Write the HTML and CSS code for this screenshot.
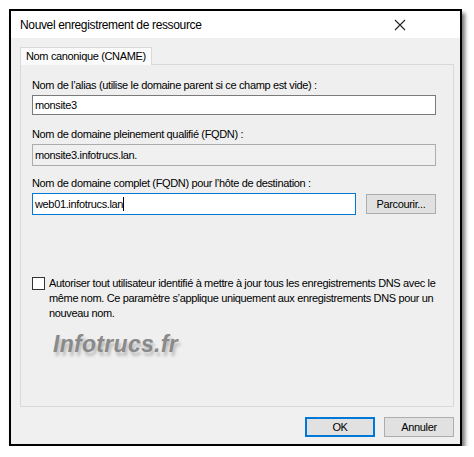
FILE: index.html
```html
<!DOCTYPE html>
<html lang="fr">
<head>
    <meta charset="UTF-8">
    <title>Nouvel enregistrement de ressource</title>
    <link rel="stylesheet" href="styles.css">
</head>
<body>
<div class="window">
    <div class="titlebar">
        <span class="title">Nouvel enregistrement de ressource</span>
        <svg class="close" width="12" height="12" viewBox="0 0 12 12">
            <path d="M1 1 L11 11 M11 1 L1 11" stroke="#222" stroke-width="1.1" fill="none"/>
        </svg>
    </div>
    <div class="content">
        <div class="tabs">
            <div class="tab">Nom canonique (CNAME)</div>
        </div>
        <div class="panel">
            <label class="field-label">Nom de l’alias (utilise le domaine parent si ce champ est vide) :</label>
            <div class="textbox">monsite3</div>

            <label class="field-label">Nom de domaine pleinement qualifié (FQDN) :</label>
            <div class="textbox disabled">monsite3.infotrucs.lan.</div>

            <label class="field-label">Nom de domaine complet (FQDN) pour l’hôte de destination :</label>
            <div class="row">
                <div class="textbox focused">web01.infotrucs.lan<span class="caret"></span></div>
                <button class="btn browse">Parcourir...</button>
            </div>

            <div class="check">
                <span class="box"></span>
                <p>Autoriser tout utilisateur identifié à mettre à jour tous les enregistrements DNS avec le même nom. Ce paramètre s’applique uniquement aux enregistrements DNS pour un nouveau nom.</p>
            </div>

            <div class="watermark">Infotrucs.fr</div>
        </div>
        <div class="footer">
            <button class="btn default">OK</button>
            <button class="btn">Annuler</button>
        </div>
    </div>
</div>
</body>
</html>
```

FILE: styles.css
```css
body {
    margin: 0;
    background: #fff;
    font-family: "Liberation Sans", Arial, sans-serif;
    font-size: 11px;
    letter-spacing: -0.35px;
    color: #000;
}
.window {
    margin: 9px 0 0 9px;
    width: 449px;
    height: 433px;
    border: 2px solid #000;
    background: #f0f0f0;
    box-shadow: 3px 4px 4px rgba(0, 0, 0, 0.55);
    display: flex;
    flex-direction: column;
}
.titlebar {
    height: 27px;
    background: #fff;
    display: flex;
    align-items: center;
    justify-content: space-between;
    padding: 0 54px 0 9px;
}
.title {
    font-size: 12px;
}
.content {
    flex: 1;
    display: flex;
    flex-direction: column;
    padding: 9px 6px 7px 9px;
}
.tabs {
    display: flex;
}
.tab {
    height: 17px;
    padding: 0 5px;
    line-height: 17px;
    background: #fafafa;
    border: 1px solid #d9d9d9;
    border-bottom: none;
    margin-bottom: -1px;
    position: relative;
    z-index: 1;
}
.panel {
    flex: 1;
    border: 1px solid #d9d9d9;
    background: #efefef;
    padding: 14px 17px 0 11px;
    display: flex;
    flex-direction: column;
}
.field-label {
    display: block;
    line-height: 13px;
    margin-bottom: 3px;
}
.textbox {
    height: 20px;
    box-sizing: border-box;
    border: 1px solid #7a7a7a;
    background: #fff;
    padding: 0 2px;
    line-height: 18px;
    margin-bottom: 13px;
}
.textbox.disabled {
    background: #f0f0f0;
    border-color: #acacac;
    height: 22px;
    line-height: 20px;
    margin-bottom: 11px;
}
.textbox.focused {
    border-color: #0078d7;
    flex: 1;
    height: 22px;
    line-height: 20px;
    margin-bottom: 0;
}
.caret {
    display: inline-block;
    width: 1px;
    height: 14px;
    background: #000;
    vertical-align: -3px;
}
.row {
    display: flex;
    gap: 10px;
    align-items: center;
}
.btn {
    font-family: "Liberation Sans", Arial, sans-serif;
    font-size: 11px;
    letter-spacing: -0.35px;
    height: 20px;
    width: 70px;
    border: 1px solid #adadad;
    background: #e1e1e1;
    padding: 0;
    color: #000;
}
.btn.default {
    border: 2px solid #0078d7;
}
.check {
    display: flex;
    margin-top: 61px;
    gap: 4px;
}
.box {
    flex: none;
    width: 11px;
    height: 11px;
    border: 1px solid #333;
    background: #fff;
    margin-top: 1px;
}
.check p {
    margin: 0;
    line-height: 15px;
    width: 394px;
}
.watermark {
    margin: 10px 0 0 21px;
    font-family: "Liberation Sans", Arial, sans-serif;
    font-size: 23px;
    font-weight: bold;
    font-style: italic;
    letter-spacing: 0.3px;
    color: #8a8a8a;
    text-shadow: 2px 4px 3px #bdbdbd;
}
.footer {
    display: flex;
    justify-content: flex-end;
    gap: 9px;
    margin-top: 10px;
}
```
